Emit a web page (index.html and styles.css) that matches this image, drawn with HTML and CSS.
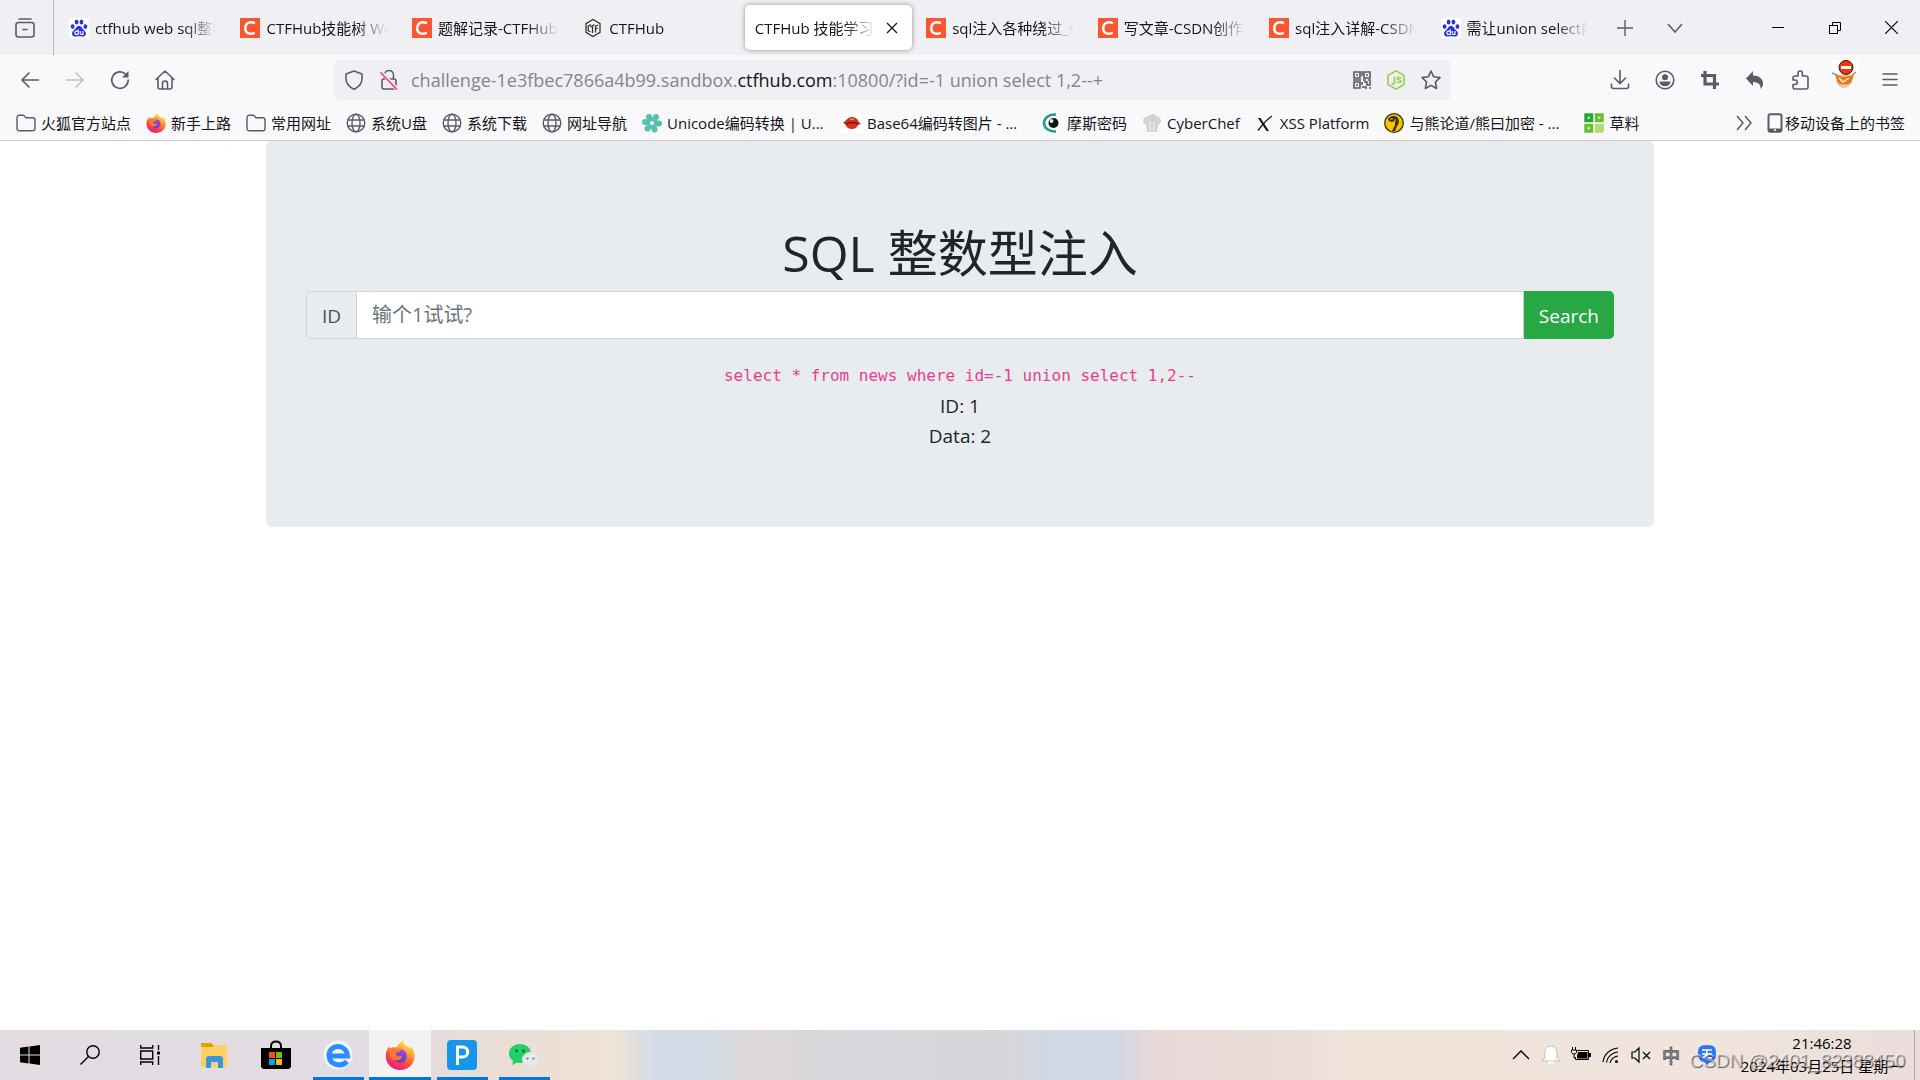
FILE: index.html
```html
<!DOCTYPE html>
<html lang="zh-CN">
<head>
    <meta charset="UTF-8">
    <meta name="viewport" content="width=device-width, initial-scale=1">
    <title>CTFHub 技能学习 | SQL 整数型注入</title>
    <link rel="stylesheet" href="styles.css">
</head>
<body>
    <!-- shared icons -->
    <svg class="sprite" width="0" height="0" aria-hidden="true">
        <symbol id="i-baidu" viewBox="0 0 20 20">
            <rect width="20" height="20" rx="2" fill="#fff"/>
            <g fill="#2932e1">
                <ellipse cx="3.6" cy="8.6" rx="1.9" ry="2.4"/>
                <ellipse cx="7.6" cy="4" rx="1.9" ry="2.6"/>
                <ellipse cx="12.4" cy="4" rx="1.9" ry="2.6"/>
                <ellipse cx="16.4" cy="8.6" rx="1.9" ry="2.4"/>
                <path d="M10 8c2.600 0 3 2.300 4.600 3.800 1.800 1.600 2.700 2.700 2.200 4.600-.5 2.200-2.800 2.300-4.300 2-1.700-.3-3.300-.3-5 0-1.500.3-3.800.2-4.300-2-.5-1.900.4-3 2.200-4.600C7 10.300 7.400 8 10 8z"/>
            </g>
            <g fill="none" stroke="#fff" stroke-width="1.200">
                <path d="M9.200 11.500v5H7.500c-2.200 0-2.200-3.300 0-3.300h1.700M11.200 13v2.300c0 .9.400 1.200 1.200 1.200h1.500V13"/>
            </g>
        </symbol>
        <symbol id="i-csdn" viewBox="0 0 20 20">
            <rect width="20" height="20" fill="#fc5531"/>
            <path d="M15 5.300C11 3 5.500 4.300 5.200 10c-.2 5.400 5 7 9.600 4.700" fill="none" stroke="#fff" stroke-width="2.400"/>
        </symbol>
        <symbol id="i-ctf" viewBox="0 0 20 20">
            <path d="M10 1.500 17 5.700v8.600l-7 4.200-7-4.200V5.700z" fill="#f4f4f4" stroke="#333" stroke-width="1.300"/>
            <path d="M8 6.500 5.200 8.200v4.500L7.500 14M7.500 9l4-2.500M9.500 8v7M12.500 14.500V8.200L15 7M12.500 11l2.300-1" fill="none" stroke="#333" stroke-width="1.300"/>
        </symbol>
        <symbol id="i-folder" viewBox="0 0 20 20">
            <path d="M1 15.500v-11A2.300 2.300 0 0 1 3.300 2.200h3.500c.8 0 1.300.3 1.800.9l1.200 1.600h6.900A2.300 2.300 0 0 1 19 7v8.500a2.300 2.300 0 0 1-2.300 2.300H3.300A2.300 2.300 0 0 1 1 15.500z" fill="none" stroke="#5b5b66" stroke-width="1.400"/>
        </symbol>
        <symbol id="i-globe" viewBox="0 0 20 20">
            <g fill="none" stroke="#5b5b66" stroke-width="1.400">
                <circle cx="10" cy="10" r="8.800"/>
                <ellipse cx="10" cy="10" rx="4" ry="8.800"/>
                <path d="M1.500 7h17M1.500 13h17"/>
            </g>
        </symbol>
        <linearGradient id="g-fox" x1="0.800" y1="0" x2="0.300" y2="1">
            <stop offset="0" stop-color="#fff44f"/>
            <stop offset=".35" stop-color="#ffa436"/>
            <stop offset=".65" stop-color="#ff4f3a"/>
            <stop offset="1" stop-color="#e31587"/>
        </linearGradient>
        <linearGradient id="g-globe" x1="0" y1="0" x2="0" y2="1">
            <stop offset="0" stop-color="#a04be0"/>
            <stop offset="1" stop-color="#5a3fc4"/>
        </linearGradient>
        <symbol id="i-firefox" viewBox="0 0 32 32">
            <path d="M19.500 0c-.5 2.500.5 4.500 2.800 6.500 3.400.5 4 2.500 4.700 3.300.6-1 .4-2.600 0-3.800 3 2.800 4.500 7 4.500 11.200C31.500 25.500 24.600 32 16.200 32S.8 25.500.8 17.300c0-4.300 1.400-7.800 3.900-10.600 0 1 .2 1.900.8 2.600 1.700-1.200 3.300-1.500 5-1.300C13.500 8.200 15 2.500 19.500 0z" fill="url(#g-fox)"/>
            <circle cx="16" cy="17" r="7.200" fill="url(#g-globe)"/>
            <path d="M4.500 9.500c2.600-2 5.800-1.700 7.800 0 2.200-.4 4.200.2 4.700 1.600-1.600 1.400-3.600 1.500-5.200 2.600-.9 1.600.4 3.100 2 3.700 1.700.5 3.200-.4 4.700.2-1.600 3.900-7 5.300-10.600 2.300-2.900-2.400-3.900-7-3.400-10.400z" fill="#ff7a2e"/>
        </symbol>
    </svg>

    <header class="browser">
        <div class="tabbar">
            <button class="archive" aria-label="最近浏览">
                <svg width="20" height="20" viewBox="0 0 20 20" fill="none" stroke="#5b5b66" stroke-width="1.600" stroke-linecap="round">
                    <path d="M4 1h12"/><rect x="1" y="4.500" width="18" height="14.500" rx="2.500"/><path d="M8 11.500h4"/>
                </svg>
            </button>
            <nav class="tabs">
                <a class="tab" href="#"><svg class="ico"><use href="#i-baidu"/></svg><span>ctfhub web sql整数型注入</span></a>
                <a class="tab" href="#"><svg class="ico"><use href="#i-csdn"/></svg><span>CTFHub技能树 Web</span></a>
                <a class="tab" href="#"><svg class="ico"><use href="#i-csdn"/></svg><span>题解记录-CTFHub技能树</span></a>
                <a class="tab" href="#"><svg class="ico"><use href="#i-ctf"/></svg><span>CTFHub</span></a>
                <div class="tab active">
                    <span>CTFHub 技能学习 |</span>
                    <button class="tab-close" aria-label="关闭标签页">
                        <svg width="12" height="12" viewBox="0 0 12 12" stroke="#15141a" stroke-width="1.300"><path d="M1 1l10 10M11 1 1 11"/></svg>
                    </button>
                </div>
                <a class="tab" href="#"><svg class="ico"><use href="#i-csdn"/></svg><span>sql注入各种绕过_sql</span></a>
                <a class="tab" href="#"><svg class="ico"><use href="#i-csdn"/></svg><span>写文章-CSDN创作中心</span></a>
                <a class="tab" href="#"><svg class="ico"><use href="#i-csdn"/></svg><span>sql注入详解-CSDN博客</span></a>
                <a class="tab" href="#"><svg class="ico"><use href="#i-baidu"/></svg><span>需让union select前</span></a>
            </nav>
            <button class="tab-tool" aria-label="新建标签页">
                <svg width="16" height="16" viewBox="0 0 16 16" stroke="#5b5b66" stroke-width="1.400"><path d="M8 0v16M0 8h16"/></svg>
            </button>
            <button class="tab-tool" aria-label="列出所有标签页">
                <svg width="16" height="16" viewBox="0 0 16 16" fill="none" stroke="#5b5b66" stroke-width="1.500"><path d="M1 4l7 8 7-8"/></svg>
            </button>
            <div class="win-buttons">
                <button aria-label="最小化"><svg width="12" height="12" viewBox="0 0 12 12" stroke="#000"><path d="M0 5.500h12"/></svg></button>
                <button aria-label="还原"><svg width="12" height="12" viewBox="0 0 12 12" fill="none" stroke="#000"><rect x=".5" y="3.500" width="8" height="8"/><path d="M3.500 3.500v-3h8v8h-3"/></svg></button>
                <button aria-label="关闭"><svg width="13" height="13" viewBox="0 0 13 13" stroke="#000" stroke-width="1.200"><path d="M0 0l13 13M13 0 0 13"/></svg></button>
            </div>
        </div>

        <div class="toolbar">
            <div class="nav-buttons">
                <button aria-label="后退"><svg width="20" height="20" viewBox="0 0 20 20" fill="none" stroke="#5b5b66" stroke-width="1.600" stroke-linecap="round"><path d="M18.500 10H2M9 3l-7 7 7 7"/></svg></button>
                <button aria-label="前进" disabled><svg width="20" height="20" viewBox="0 0 20 20" fill="none" stroke="#bfbfc5" stroke-width="1.600" stroke-linecap="round"><path d="M1.500 10H18M11 3l7 7-7 7"/></svg></button>
                <button aria-label="刷新"><svg width="20" height="20" viewBox="0 0 20 20" fill="none" stroke="#5b5b66" stroke-width="1.700" stroke-linecap="round"><path d="M16 4.500A8.200 8.200 0 1 0 18.200 10"/><path d="M18.500 1v6.500H12z" fill="#5b5b66" stroke="none"/></svg></button>
                <button aria-label="主页"><svg width="20" height="20" viewBox="0 0 20 20" fill="none" stroke="#5b5b66" stroke-width="1.600" stroke-linejoin="round" stroke-linecap="round"><path d="M1 9.500 10 1l9 8.500M3 8v9a2 2 0 0 0 2 2h10a2 2 0 0 0 2-2V8M7.500 19v-5.500a2.500 2.500 0 0 1 5 0V19"/></svg></button>
            </div>
            <div class="urlbar">
                <svg width="20" height="20" viewBox="0 0 20 20" fill="none" stroke="#5b5b66" stroke-width="1.600" stroke-linejoin="round"><path d="M10 1 18 4v4.500c0 5-3 8.500-8 10.700-5-2.200-8-5.700-8-10.700V4z"/></svg>
                <svg width="20" height="20" viewBox="0 0 20 20" fill="none" stroke="#5b5b66" stroke-width="1.600"><path d="M5.500 9V5a4.500 4.500 0 0 1 9 0v4"/><rect x="3" y="9" width="14" height="10" rx="2"/><path d="M2 2l16.500 17.500" stroke="#f0f0f4" stroke-width="4"/><path d="M1.500 2.500 18 19.500" stroke="#ff3a6c"/></svg>
                <div class="url" role="textbox" aria-label="地址栏">challenge-1e3fbec7866a4b99.sandbox.<b>ctfhub.com</b>:10800/?id=-1 union select 1,2--+</div>
                <svg width="18" height="18" viewBox="0 0 18 18" fill="none" stroke="#5b5b66" stroke-width="1.600"><path d="M1 1h6v6H1zM11 1h6v6h-6zM1 11h6v6H1z"/><path d="M3 4h2M13 4h2M3 14h2M9 0v5M8 9H0M10 9h3M15 9h3M9 11v3M11 11h3v3h3v-4M9 16h4v2M16 17h2"/></svg>
                <svg width="20" height="20" viewBox="0 0 20 20" fill="none" stroke="#8cd63f" stroke-width="1.600" stroke-linejoin="round"><path d="M10 .9 18 5.400v9.200l-8 4.500-8-4.500V5.400z"/><path d="M8.500 6.500v6c0 1.500-1.500 1.800-3 1M15 7.800c-1.200-.8-3.800-.8-3.800.7 0 1.600 3.800.8 3.800 2.700 0 1.600-2.700 1.600-4.200.6"/></svg>
                <svg width="20" height="20" viewBox="0 0 20 20" fill="none" stroke="#5b5b66" stroke-width="1.600" stroke-linejoin="round"><path d="M10 1l2.700 5.800 6.300.8-4.600 4.400 1.200 6.500L10 15.400l-5.600 3.100L5.600 12 1 7.600l6.300-.8z"/></svg>
            </div>
            <div class="tool-buttons">
                <button aria-label="下载"><svg width="20" height="20" viewBox="0 0 20 20" fill="none" stroke="#5b5b66" stroke-width="1.600" stroke-linecap="round"><path d="M10 0v13M4.500 8l5.500 5.500L15.500 8M1.500 14v2.500a2 2 0 0 0 2 2h13a2 2 0 0 0 2-2V14"/></svg></button>
                <button aria-label="账户"><svg width="20" height="20" viewBox="0 0 20 20"><circle cx="10" cy="10" r="8.800" fill="none" stroke="#5b5b66" stroke-width="1.600"/><circle cx="10" cy="7.300" r="3" fill="#5b5b66"/><path d="M4.500 11.500h11c0 3-2.500 4.700-5.500 4.700s-5.500-1.700-5.500-4.700z" fill="#5b5b66"/></svg></button>
                <button aria-label="截图"><svg width="20" height="20" viewBox="0 0 20 20" fill="none" stroke="#5b5b66" stroke-width="3.200"><path d="M5 1v13h14M1 5.500h13.500V19"/></svg></button>
                <button aria-label="撤销"><svg width="20" height="20" viewBox="0 0 20 20" fill="#5b5b66"><path d="M8 1v4.500c6 0 10 3.500 10 8 0 2.500-1 4-2.500 5.500.6-4-2-7-7.500-7V16L1 8.500z"/></svg></button>
                <button aria-label="扩展"><svg width="20" height="20" viewBox="0 0 20 20" fill="none" stroke="#5b5b66" stroke-width="1.600" stroke-linejoin="round"><path d="M8 6V3.200a2.200 2.200 0 0 1 4.400 0V6H16a2 2 0 0 1 2 2v9a2 2 0 0 1-2 2H5a2 2 0 0 1-2-2v-2.500h2a2.200 2.200 0 0 0 0-4.500H3V8a2 2 0 0 1 2-2z"/></svg></button>
                <button class="fox" aria-label="代理">
                    <svg width="26" height="28" viewBox="0 0 26 28"><path d="M0 0h26v14H0z" fill="#fff"/><path d="M3 15h18l-1 5c-1 5-4 8-8 8s-7-3-8-8z" fill="#f3c79a"/><path d="M3 14l8 3 11-2-3 8c-4 2-9 2-13 0z" fill="#e57a1d"/><path d="M0 13l5 2M24 12l-4 3" stroke="#9b8b7b" stroke-width="1.500"/><path d="M7 18l4 4 6-4" fill="none" stroke="#fff3e0" stroke-width="1.500"/><circle cx="14" cy="7.500" r="7" fill="#f2330d" stroke="#3c1a10"/><path d="M9 7.500h10" stroke="#fff" stroke-width="3"/></svg>
                </button>
                <button aria-label="菜单"><svg width="20" height="20" viewBox="0 0 20 20" stroke="#5b5b66" stroke-width="1.500" stroke-linecap="round"><path d="M3 4h14M3 9.500h14M3 15h14"/></svg></button>
            </div>
        </div>

        <nav class="bookmarks">
            <a href="#"><svg class="ico"><use href="#i-folder"/></svg>火狐官方站点</a>
            <a href="#"><svg class="ico"><use href="#i-firefox"/></svg>新手上路</a>
            <a href="#"><svg class="ico"><use href="#i-folder"/></svg>常用网址</a>
            <a href="#"><svg class="ico"><use href="#i-globe"/></svg>系统U盘</a>
            <a href="#"><svg class="ico"><use href="#i-globe"/></svg>系统下载</a>
            <a href="#"><svg class="ico"><use href="#i-globe"/></svg>网址导航</a>
            <a class="long" href="#"><svg class="ico" viewBox="0 0 20 20"><g fill="#57bfae"><circle cx="7" cy="4" r="3"/><circle cx="14" cy="4" r="3"/><circle cx="17" cy="10.500" r="3"/><circle cx="12.500" cy="16.500" r="3"/><circle cx="5.500" cy="15.500" r="3"/><circle cx="3" cy="9" r="3"/><circle cx="10" cy="10" r="6"/></g><circle cx="10" cy="10" r="2" fill="#f9f9fb"/></svg>Unicode编码转换 | U...</a>
            <a class="long" href="#"><svg class="ico" viewBox="0 0 20 20"><path d="M0 0h20v20H0z" fill="#fff"/><path d="M1 9.500c3-1 4-5 8-5.500 4-.4 7 2 7.500 4.500l2.500 2.500-3 1c-1 3-4 4.500-7 4-3-.4-5-2-5.500-4.500z" fill="#cf3420"/><path d="M4 11c4-2 8-2 12 0" fill="none" stroke="#6e170c" stroke-width="1.500"/><path d="M8 6.500l4-.5" stroke="#f08a6a" stroke-width="1.500"/></svg>Base64编码转图片 - ...</a>
            <a href="#"><svg class="ico" viewBox="0 0 20 20"><path d="M14 1.500C7 1 2 5 2 10s5 9 12 8.500" fill="none" stroke="#1d9e8f" stroke-width="2.600"/><circle cx="11.500" cy="10" r="5" fill="#111"/><circle cx="9.500" cy="8" r="2" fill="#ddd"/></svg>摩斯密码</a>
            <a href="#"><svg class="ico" viewBox="0 0 20 20"><path d="M4 12C-1 9 1 3 5.500 3.500 8 0 13 0 14.500 3.500 19 3 21 9 16 12l-1 7H5z" fill="#d3d3d3"/><path d="M8 18V8M12 18V9" stroke="#ececec" stroke-width="1.500"/></svg>CyberChef</a>
            <a href="#"><svg class="ico" viewBox="0 0 20 20"><path d="M3 5h2.500l8.500 13h-2.500z" fill="#111"/><path d="M17 3C11 7 7 12 3 17.500" fill="none" stroke="#111" stroke-width="1.300"/></svg>XSS Platform</a>
            <a class="long" href="#"><svg class="ico" viewBox="0 0 20 20"><circle cx="10" cy="10" r="9.300" fill="#f6c400" stroke="#3b3000" stroke-width="1.300"/><path d="M4 6c2-3 6-4 9-2 3 3 2 7 0 9l-2 5H8l3-6V8L8 9 5 8z" fill="#3a3012"/><path d="M6 6h3M11 6v3" stroke="#f6c400"/></svg>与熊论道/熊曰加密 - ...</a>
            <a href="#"><svg class="ico" viewBox="0 0 20 20" fill="none" stroke-width="3.500"><rect x="2" y="2" width="5.500" height="5.500" stroke="#1fa83c"/><rect x="12.500" y="2" width="5.500" height="5.500" stroke="#6abf2e"/><rect x="2" y="12.500" width="5.500" height="5.500" stroke="#6abf2e"/><path d="M11 11h9v7l-2 2h-7z" fill="#b3dd74"/></svg>草料</a>
            <button class="more" aria-label="更多书签"><svg width="16" height="16" viewBox="0 0 16 16" fill="none" stroke="#5b5b66" stroke-width="1.500"><path d="M1 1l6 7-6 7M9 1l6 7-6 7"/></svg></button>
            <a class="mobile" href="#"><svg width="16" height="20" viewBox="0 0 16 20"><rect x="1.500" y="1.200" width="13" height="17.600" rx="2" fill="none" stroke="#5b5b66" stroke-width="2"/><path d="M2 17h12" stroke="#5b5b66" stroke-width="3"/><circle cx="8" cy="17" r="1" fill="#fff"/></svg>移动设备上的书签</a>
        </nav>
    </header>

    <main class="page">
        <div class="jumbotron">
            <h1>SQL 整数型注入</h1>
            <form class="input-group" onsubmit="return false">
                <label for="id">ID</label>
                <input type="text" id="id" name="id" placeholder="输个1试试?">
                <button type="submit">Search</button>
            </form>
            <code>select * from news where id=-1 union select 1,2--</code>
            <p>ID: 1</p>
            <p>Data: 2</p>
        </div>
    </main>

    <footer class="taskbar">
        <div class="launch">
            <button class="sys" aria-label="开始"><svg width="20" height="20" viewBox="0 0 20 20"><path d="M0 2.800 8.500 1.600v8H0zM9.500 1.400 20 0v9.600H9.500zM0 10.500h8.500v8L0 17.300zM9.500 10.500H20V20L9.500 18.600z"/></svg></button>
            <button class="sys" aria-label="搜索"><svg width="20" height="20" viewBox="0 0 20 20" fill="none" stroke="#000" stroke-width="1.400"><circle cx="13" cy="7" r="6.200"/><path d="M8.500 11.500.5 19.500"/></svg></button>
            <button class="sys" aria-label="任务视图"><svg width="20" height="20" viewBox="0 0 20 20" fill="none" stroke="#000" stroke-width="1.400"><path d="M.7 0v3h12V0M.7 6h12v8H.7zM.7 20v-3h12v3M18.500 0v5M18.500 11v9"/><path d="M17 8h3" stroke-width="3"/></svg></button>
            <button class="app" aria-label="文件资源管理器"><svg width="28" height="28" viewBox="0 0 28 28"><path d="M1 2h10l3 3v4H1z" fill="#dfa000"/><path d="M1 6h12l2-2h12v22H1z" fill="#fdd063"/><path d="M6 27V18a3 3 0 0 1 3-3h11a3 3 0 0 1 3 3v9h-5v-6h-7v6z" fill="#3a96dd"/></svg></button>
            <button class="app" aria-label="应用商店"><svg width="30" height="30" viewBox="0 0 30 30"><path d="M10 9V6c0-6 10-6 10 0v3" fill="none" stroke="#000" stroke-width="2"/><path d="M0 8h30v19l-2 2H2l-2-2z"/><path d="M8 12h6v6H8z" fill="#f25022"/><path d="M15 12h6v6h-6z" fill="#7fba00"/><path d="M8 19h6v6H8z" fill="#00a4ef"/><path d="M15 19h6v6h-6z" fill="#ffb900"/></svg></button>
            <button class="app open" aria-label="浏览器"><svg width="30" height="30" viewBox="0 0 30 30"><circle cx="15" cy="15" r="14.500" fill="#eef6ff"/><path d="M24 21.500C19 27 6.500 26 6 15.500 6 4 23.500 3 24.500 16H7" fill="none" stroke="#2b8cff" stroke-width="5"/></svg></button>
            <button class="app open current" aria-label="Firefox"><svg width="30" height="30"><use href="#i-firefox"/></svg></button>
            <button class="app open" aria-label="PicGo"><svg width="30" height="30" viewBox="0 0 30 30"><rect width="30" height="30" rx="4" fill="#1795e8"/><path d="M10.500 25V7h5c7 0 7 10 0 10h-5" fill="none" stroke="#fff" stroke-width="3"/></svg></button>
            <button class="app open" aria-label="微信"><svg width="30" height="24" viewBox="0 0 30 24"><path d="M11 1c6 0 11 4 11 9.500S17 20 11 20c-1 0-2 0-3-.4L3 22l1.200-4C1.500 16.500 0 13.500 0 10.500 0 5 5 1 11 1z" fill="#1fd166"/><circle cx="7.500" cy="8" r="1.400" fill="#0a6b32"/><circle cx="14.500" cy="8" r="1.400" fill="#0a6b32"/><ellipse cx="21.500" cy="16.500" rx="8.500" ry="7.500" fill="#e8e8e8"/><circle cx="18.500" cy="15.500" r="1.100" fill="#777"/><circle cx="24.500" cy="15.500" r="1.100" fill="#777"/></svg></button>
        </div>
        <div class="tray">
            <button aria-label="显示隐藏的图标"><svg width="18" height="20" viewBox="0 0 18 20" fill="none" stroke="#000" stroke-width="1.400"><path d="M1 14l8-8 8 8"/></svg></button>
            <button aria-label="通知"><svg width="20" height="20" viewBox="0 0 20 20"><path d="M10 1c5 0 6 4 6 7v5l3 3H1l3-3V8c0-3 1-7 6-7z" fill="#fff" stroke="#b8b0ac" stroke-width=".8"/><path d="M7 17.500h6" stroke="#fff" stroke-width="2"/></svg></button>
            <button aria-label="电池"><svg width="20" height="20" viewBox="0 0 20 20"><path d="M5.500 5.500h12v9H4.500V12" fill="none" stroke="#000"/><path d="M7 7h9.500v6.500H6V11z"/><path d="M18 8h2v4h-2z"/><path d="M1.500 2v3M4.500 2v3M.5 5h5v2.500L4 9H2L.5 7.500zM3 9v4h2" fill="none" stroke="#000"/></svg></button>
            <button aria-label="网络"><svg width="20" height="20" viewBox="0 0 20 20" fill="none" stroke="#000" stroke-width="1.200"><path d="M2 17C3 9 9 4 17 3M5.500 17.500C6 12 11 7.500 17 7M9 18c.5-3.500 4-6.500 8-7"/><circle cx="15.500" cy="16.500" r="1.500" fill="#000" stroke="none"/></svg></button>
            <button aria-label="音量"><svg width="20" height="20" viewBox="0 0 20 20" fill="none" stroke="#000" stroke-width="1.200"><path d="M1 7h3l4-4v14l-4-4H1zM12 7l7 7M19 7l-7 7"/></svg></button>
            <button class="ime" aria-label="输入法">中</button>
            <button class="doc" aria-label="助手"><svg width="18" height="20" viewBox="0 0 18 20"><path d="M9 0c8 0 9 3 9 8s-2 9-6 9l-3 3-3-3C2 17 0 13 0 8s1-8 9-8z" fill="#2878ff"/><path d="M4 5h10M4 9h10M9 5c0 5-2 7-5 8M9 9c0 4 1 4 5 4" fill="none" stroke="#fff" stroke-width="1.600"/></svg></button>
            <div class="clock"><time>21:46:28</time><time>2024年03月25日 星期一</time></div>
        </div>
        <div class="watermark">CSDN @2401_82388450</div>
    </footer>
</body>
</html>
```
FILE: styles.css
```css
* {
    box-sizing: border-box;
}
body {
    margin: 0;
    min-height: 100vh;
    display: flex;
    flex-direction: column;
    background: #fff;
    color: #15141a;
    font-family: "Open Sans", "Noto Sans CJK SC", sans-serif;
    font-size: 15px;
}
button {
    padding: 0;
    border: 0;
    background: none;
    color: inherit;
    font: inherit;
}
a {
    color: inherit;
    text-decoration: none;
}
svg {
    display: block;
    flex: none;
}
.sprite {
    position: absolute;
}
.ico {
    width: 20px;
    height: 20px;
}

/* tab strip */
.browser {
    background: #f9f9fb;
    border-bottom: 1px solid #ccc;
    line-height: 20px;
}
.tabbar {
    display: flex;
    height: 55px;
    background: #f0f0f4;
}
.archive {
    width: 54px;
    padding-left: 15px;
    border-right: 1px solid #b8b8bd;
}
.tabs {
    display: flex;
    flex: 0 1 1546px;
    min-width: 0;
    padding: 5px 0 5px 3px;
}
.tab {
    display: flex;
    flex: 1 1 0;
    align-items: center;
    gap: 6px;
    min-width: 0;
    margin: 0 2px;
    padding: 0 10px;
    border-radius: 5px;
}
.tab span {
    flex: 1;
    overflow: hidden;
    white-space: nowrap;
    mask-image: linear-gradient(to left, transparent, #000 32px);
}
.tab.active {
    background: #fff;
    box-shadow: 0 0 5px rgba(0, 0, 0, 0.4);
}
.tab-close {
    padding: 4px;
}
.tab-tool {
    display: grid;
    place-items: center;
    width: 50px;
}
.win-buttons {
    display: flex;
    margin-left: auto;
}
.win-buttons button {
    display: grid;
    place-items: center;
    width: 57px;
}

/* address bar */
.toolbar {
    display: flex;
    align-items: center;
    height: 50px;
    padding: 0 8px 0 7px;
}
.nav-buttons, .tool-buttons {
    display: flex;
}
.nav-buttons {
    width: 327px;
}
.nav-buttons button, .tool-buttons button {
    display: grid;
    place-items: center;
    width: 45px;
    height: 40px;
}
.tool-buttons .fox {
    align-items: start;
}
.urlbar {
    display: flex;
    flex: 1;
    align-items: center;
    gap: 15px;
    height: 40px;
    margin-right: 146px;
    padding: 0 10px;
    background: #f0f0f4;
    border-radius: 5px;
}
.url {
    flex: 1;
    margin-left: -3px;
    color: #85858b;
    font-size: 18px;
    white-space: nowrap;
}
.url b {
    color: #15141a;
    font-weight: normal;
}

/* bookmarks */
.bookmarks {
    display: flex;
    align-items: center;
    gap: 15px;
    height: 35px;
    padding: 0 15px 0 16px;
    white-space: nowrap;
}
.bookmarks a {
    display: flex;
    align-items: center;
    gap: 5px;
}
.bookmarks .long {
    width: 185px;
}
.bookmarks .more {
    margin-left: auto;
}
.bookmarks .mobile {
    gap: 2px;
}

/* page */
.page {
    flex: 1;
    width: 100%;
    max-width: 1388px;
    margin: 0 auto;
    color: #212529;
    font-size: 19px;
    line-height: 30px;
}
.jumbotron {
    padding: 82px 40px 76px;
    background: #e9ecef;
    border-radius: 6px;
    text-align: center;
}
.jumbotron h1 {
    margin: 0 0 8px;
    font-size: 50px;
    font-weight: normal;
    line-height: 60px;
}
.input-group {
    display: flex;
    height: 48px;
    margin-bottom: 22px;
}
.input-group label {
    padding: 9px 15px;
    border: 1px solid #ced4da;
    border-right: 0;
    border-radius: 5px 0 0 5px;
    color: #495057;
}
.input-group input {
    flex: 1;
    min-width: 0;
    padding: 0 15px;
    border: 1px solid #ced4da;
    background: #fff;
    font: inherit;
    font-size: 20px;
}
.input-group input::placeholder {
    color: #6c757d;
}
.input-group button {
    padding: 1px 15px 0;
    background: #28a745;
    border-radius: 0 5px 5px 0;
    color: #fff;
}
.jumbotron code {
    display: block;
    color: #e83e8c;
    font-family: "DejaVu Sans Mono", monospace;
    font-size: 16px;
}
.jumbotron p {
    margin: 0;
}

/* taskbar */
.taskbar {
    position: relative;
    display: flex;
    justify-content: space-between;
    height: 50px;
    background: linear-gradient(to right, #e3dde3, #e0dce1 20%, #e9ddd7 25%, #efe2d6 32%, #d4dde7 34%, #d4dde7 37%, #ddd7d9 39%, #d6d6dc 45%, #d8d5d9 52%, #cfd8e4 55%, #cfd8e4 58%, #e8d9d8 60%, #e9dbd8 66%, #efe3da 70%, #f0e4dc 90%, #eadddc);
    color: #000;
}
.launch, .tray {
    display: flex;
    align-items: center;
}
.launch button {
    display: grid;
    place-items: center;
    height: 50px;
}
.sys {
    width: 60px;
}
.app {
    width: 62px;
}
.sys + .app {
    margin-left: 3px;
}
.open {
    background: linear-gradient(#0078d7, #0078d7) bottom / 51px 3px no-repeat;
}
.current {
    background: linear-gradient(#0078d7, #0078d7) bottom / 100% 3px no-repeat, #f4f1f2;
}
.tray {
    margin-right: 5px;
    padding-right: 4px;
    border-right: 1px solid #b5a9a8;
}
.tray button {
    display: grid;
    place-items: center;
    width: 30px;
}
.tray .ime {
    color: #fff;
    font-size: 18px;
    -webkit-text-stroke: 1px #555;
}
.tray .doc {
    width: 42px;
}
.clock {
    display: flex;
    flex-direction: column;
    align-items: center;
    width: 176px;
    margin-left: 6px;
    line-height: 23px;
    white-space: nowrap;
}
.watermark {
    position: absolute;
    right: 15px;
    bottom: 8px;
    color: rgba(255, 255, 255, 0.5);
    font-family: "Liberation Sans", sans-serif;
    font-size: 19px;
    line-height: 22px;
    text-shadow: 1px 1px 1px rgba(0, 0, 0, 0.6);
}
```
